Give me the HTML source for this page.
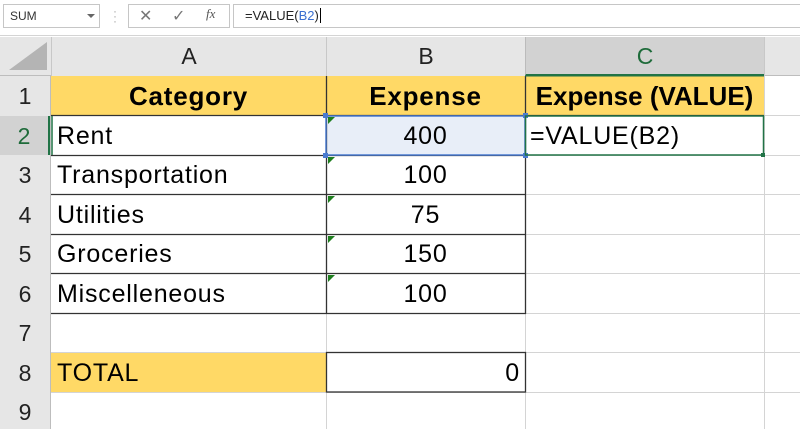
<!DOCTYPE html>
<html><head><style>
*{margin:0;padding:0;box-sizing:border-box}
body{width:800px;height:429px;overflow:hidden;background:#fff;position:relative;font-family:"Liberation Sans",sans-serif}
.a{position:absolute}
.t{position:absolute;font-size:25px;letter-spacing:0.8px;color:#000;line-height:39px;white-space:nowrap}
.hd{position:absolute;background:#e6e6e6;color:#222;font-size:23px;text-align:center}
.tri{position:absolute;width:0;height:0;border-top:7px solid #1e7e1e;border-right:7px solid transparent}
</style></head><body>
<div class="a" style="left:0;top:0;width:800px;height:36px;background:#fff;border-bottom:1px solid #d4d4d4"></div>
<div class="a" style="left:3px;top:4px;width:97px;height:24px;border:1px solid #c6c6c6;background:#fff;font-size:12px;line-height:22px;padding-left:6px;color:#333">SUM</div>
<div class="a" style="left:87px;top:14px;border-top:4px solid #666;border-left:4px solid transparent;border-right:4px solid transparent"></div>
<div class="a" style="left:113px;top:9px;color:#aaa;font-size:12px;line-height:5px">·<br>·<br>·</div>
<div class="a" style="left:128px;top:4px;width:102px;height:24px;border:1px solid #c6c6c6;background:#fff"></div>
<div class="a" style="left:139px;top:6px;font-size:16px;color:#777">✕</div>
<div class="a" style="left:172px;top:6px;font-size:16px;color:#777">✓</div>
<div class="a" style="left:206px;top:6px;font-size:13px;color:#555;font-family:'Liberation Serif',serif;font-style:italic">fx</div>
<div class="a" style="left:233px;top:4px;width:567px;height:24px;border:1px solid #c6c6c6;border-right:none;background:#fff;font-size:13px;line-height:22px;padding-left:11px;color:#222">=VALUE(<span style="color:#3a6fd0">B2</span>)<span style="border-left:1px solid #000;margin-left:1px"></span></div>
<div class="hd" style="left:0;top:37px;width:800px;height:39px;border-bottom:1px solid #bdbdbd"></div>
<div class="a" style="left:9px;top:42px;width:0;height:0;border-bottom:28px solid #b4b4b4;border-left:38px solid transparent"></div>
<div class="hd" style="left:51px;top:37px;width:275px;height:39px;line-height:39px;border-left:1px solid #c8c8c8">A</div>
<div class="hd" style="left:326px;top:37px;width:199px;height:39px;line-height:39px;border-left:1px solid #c8c8c8">B</div>
<div class="hd" style="left:525px;top:37px;width:239px;height:39px;line-height:39px;background:#d2d2d2;color:#1e6b3a;border-left:1px solid #bbb;border-bottom:2px solid #217346">C</div>
<div class="a" style="left:764px;top:37px;width:1px;height:39px;background:#c8c8c8"></div>
<div class="hd" style="left:0;top:76px;width:51px;height:353px;border-right:1px solid #bdbdbd"></div>
<div class="hd" style="left:0;top:76px;width:50px;height:39px;line-height:40px">1</div>
<div class="hd" style="left:0;top:116px;width:50px;height:39px;line-height:40px;background:#d2d2d2;color:#1e6b3a;border-right:2px solid #217346">2</div>
<div class="hd" style="left:0;top:155px;width:50px;height:39px;line-height:40px">3</div>
<div class="hd" style="left:0;top:195px;width:50px;height:39px;line-height:40px">4</div>
<div class="hd" style="left:0;top:234px;width:50px;height:39px;line-height:40px">5</div>
<div class="hd" style="left:0;top:274px;width:50px;height:39px;line-height:40px">6</div>
<div class="hd" style="left:0;top:313px;width:50px;height:39px;line-height:40px">7</div>
<div class="hd" style="left:0;top:353px;width:50px;height:39px;line-height:40px">8</div>
<div class="hd" style="left:0;top:392px;width:50px;height:37px;line-height:40px">9</div>
<svg class="a" style="left:51px;top:76px" width="749" height="353">
<g stroke="#d4d4d4" stroke-width="1">
<line x1="0" y1="39.5" x2="749" y2="39.5"/><line x1="0" y1="79.5" x2="749" y2="79.5"/>
<line x1="0" y1="118.5" x2="749" y2="118.5"/><line x1="0" y1="158.5" x2="749" y2="158.5"/>
<line x1="0" y1="197.5" x2="749" y2="197.5"/><line x1="0" y1="237.5" x2="749" y2="237.5"/>
<line x1="0" y1="276.5" x2="749" y2="276.5"/><line x1="0" y1="316.5" x2="749" y2="316.5"/>
<line x1="275.5" y1="0" x2="275.5" y2="353"/><line x1="474.5" y1="0" x2="474.5" y2="353"/>
<line x1="713.5" y1="0" x2="713.5" y2="353"/>
</g></svg>
<div class="a" style="left:51px;top:76px;width:713px;height:40px;background:#ffd966"></div>
<div class="a" style="left:51px;top:353px;width:275px;height:39px;background:#ffd966"></div>
<div class="a" style="left:326px;top:116px;width:199px;height:39px;background:#e8eef8"></div>
<svg class="a" style="left:0;top:0" width="800" height="429">
<g stroke="#333" stroke-width="1.3" fill="none">
<line x1="326.5" y1="76" x2="326.5" y2="314"/>
<line x1="525.5" y1="76" x2="525.5" y2="314"/>
<line x1="51" y1="115.5" x2="764" y2="115.5"/>
<line x1="51" y1="155.5" x2="526" y2="155.5"/>
<line x1="51" y1="194.5" x2="526" y2="194.5"/>
<line x1="51" y1="234.5" x2="526" y2="234.5"/>
<line x1="51" y1="273.5" x2="526" y2="273.5"/>
<line x1="51" y1="313.5" x2="526" y2="313.5"/>
<rect x="326.5" y="352.5" width="199" height="39.5"/>
</g>
<rect x="326" y="116" width="199" height="39" fill="none" stroke="#4a7bd0" stroke-width="1.5"/>
<g fill="#4a7bd0"><rect x="323" y="113" width="5" height="5"/><rect x="523" y="113" width="5" height="5"/><rect x="323" y="153" width="5" height="5"/><rect x="523" y="153" width="5" height="5"/></g>
<rect x="525.5" y="116" width="238" height="39" fill="none" stroke="#217346" stroke-width="1.5"/>
<rect x="761" y="153" width="4" height="4" fill="#217346"/>
<line x1="52" y1="116" x2="52" y2="155" stroke="#217346" stroke-width="1.5"/>
<line x1="525" y1="76" x2="764" y2="76" stroke="#217346" stroke-width="1"/>
</svg>
<div class="tri" style="left:328px;top:117px"></div>
<div class="tri" style="left:328px;top:157px"></div>
<div class="tri" style="left:328px;top:196px"></div>
<div class="tri" style="left:328px;top:236px"></div>
<div class="tri" style="left:328px;top:275px"></div>
<div class="t" style="left:51px;top:77px;width:275px;text-align:center;font-weight:bold;font-size:26px">Category</div>
<div class="t" style="left:326px;top:77px;width:199px;text-align:center;font-weight:bold;font-size:26px">Expense</div>
<div class="t" style="left:525px;top:77px;width:239px;text-align:center;font-weight:bold;font-size:26px;letter-spacing:0">Expense (VALUE)</div>
<div class="t" style="left:57px;top:117px">Rent</div>
<div class="t" style="left:57px;top:156px">Transportation</div>
<div class="t" style="left:57px;top:196px">Utilities</div>
<div class="t" style="left:57px;top:235px">Groceries</div>
<div class="t" style="left:57px;top:275px">Miscelleneous</div>
<div class="t" style="left:57px;top:354px">TOTAL</div>
<div class="t" style="left:326px;top:117px;width:199px;text-align:center">400</div>
<div class="t" style="left:326px;top:156px;width:199px;text-align:center">100</div>
<div class="t" style="left:326px;top:196px;width:199px;text-align:center">75</div>
<div class="t" style="left:326px;top:235px;width:199px;text-align:center">150</div>
<div class="t" style="left:326px;top:275px;width:199px;text-align:center">100</div>
<div class="t" style="left:326px;top:354px;width:194px;text-align:right">0</div>
<div class="t" style="left:530px;top:117px">=VALUE(B2)</div>
</body></html>
